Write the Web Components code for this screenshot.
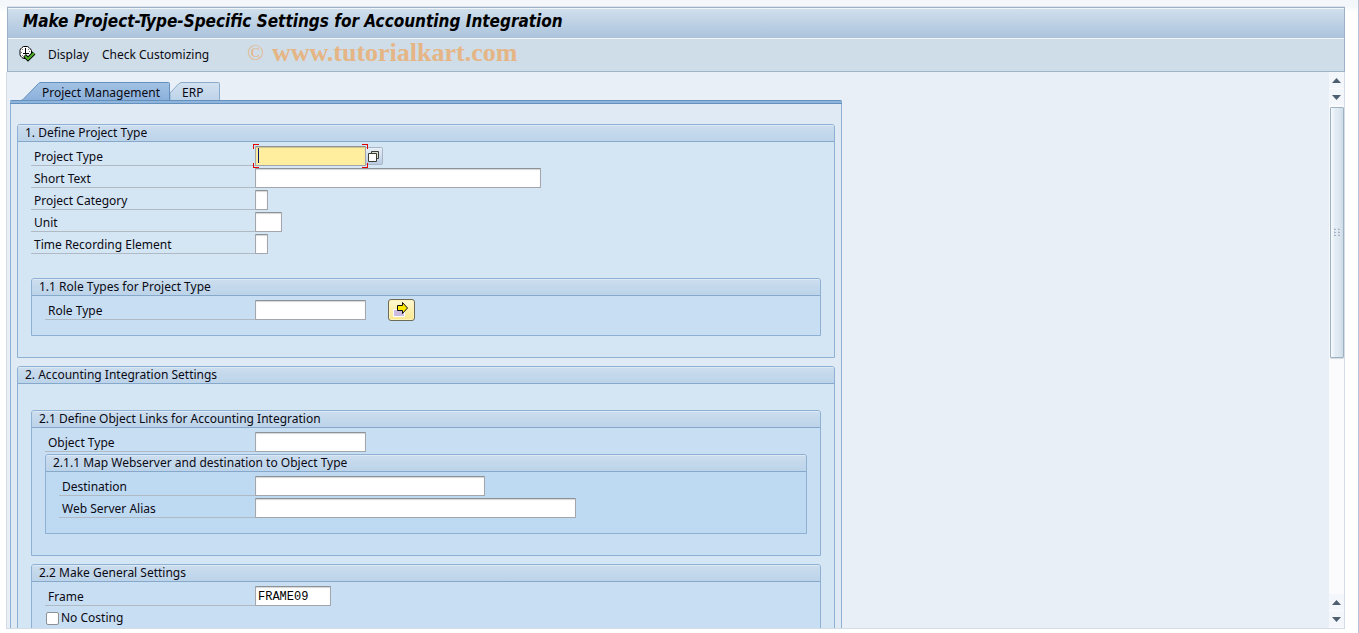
<!DOCTYPE html>
<html lang="en">
<head>
<meta charset="utf-8">
<title>Make Project-Type-Specific Settings for Accounting Integration</title>
<style>
body { margin: 0; background: #fff; font: 12px/16px "Noto Sans", sans-serif; color: #0a0a14; }
</style>
</head>
<body>
<sap-page></sap-page>

<script>
function define(name, html, setup) {
  const tpl = document.createElement('template');
  tpl.innerHTML = '<style>*{box-sizing:border-box}button,input{font:inherit;color:inherit;margin:0}</style>' + html;
  customElements.define(name, class extends HTMLElement {
    constructor() {
      super();
      this.attachShadow({ mode: 'open' }).appendChild(tpl.content.cloneNode(true));
    }
    connectedCallback() { if (setup) setup(this, this.shadowRoot); }
  });
}

/* Title bar */
define('sap-titlebar', `
<style>
:host { display: block; box-sizing: border-box; height: 31px; padding: 0 15px; border-bottom: 1px solid #f2f6fa;
  background: linear-gradient(#f0f5fa 0 1px, #cfdfec 1px, #abc3dc); }
h1 { margin: 0; font: italic bold 17px/26px "DejaVu Sans Condensed", "DejaVu Sans", sans-serif; color: #000; white-space: nowrap; }
</style>
<h1><slot></slot></h1>`);

/* Application toolbar */
define('sap-toolbar', `
<style>
:host { display: flex; box-sizing: border-box; align-items: center; height: 33px; padding-left: 10px;
  background: #cfdde8; border-bottom: 1px solid #9fb4c7; }
button { border: 0; padding: 0; background: none; white-space: nowrap; line-height: 16px; }
.exec { width: 18px; height: 18px; margin-right: 12px; }
.check { margin-left: 13px; }
svg { display: block; }
.mark { display: flex; align-items: center; gap: 8px; margin-left: 38px; color: #e5b585; height: 24px; margin-bottom: 5px; }
.c { font: 22px/24px "Liberation Serif", serif; }
.w { font: bold 26px/24px "Liberation Serif", serif; }
</style>
<button class="exec" aria-label="Execute"><svg width="18" height="18" viewBox="0 0 18 18">
<path d="M5.500 .5h4l1.500 1 1.500 1.500 1 1.500v4l-1 1.500-1.500 1.500-1.500 1h-4l-1.500-1-1.500-1.500-.5-1.500v-4l.5-1.500 1.500-1.500z" fill="#fff" stroke="#000"/>
<path d="M7.500 2v5.500M5 7.500h6" stroke="#000" fill="none"/>
<path d="M3 6.500h1M11 5.500h1M4.500 9v1M4.500 3v1M10.500 3v1" stroke="#777"/>
<path d="M6.500 9.500l3.500 3.500 6-6" stroke="#000" stroke-width="4" fill="none"/>
<path d="M7 10l3 3 6-6" stroke="#4fae24" stroke-width="2.200" fill="none"/>
</svg></button>
<button class="display">Display</button>
<button class="check">Check Customizing</button>
<div class="mark"><span class="c">©</span><span class="w">www.tutorialkart.com</span></div>`);

/* Tab strip */
define('sap-tabs', `
<style>
:host { display: block; width: 832px; }
.strip { display: flex; height: 18px; padding-left: 11px; }
button { position: relative; border: 0; padding: 0; background: none; height: 18px; line-height: 21px; white-space: nowrap; }
.on { width: 149px; padding-left: 21px; text-align: left; }
.off { width: 50px; padding-left: 12px; text-align: left; }
svg { position: absolute; left: 0; top: 0; z-index: -1; }
.strip { position: relative; z-index: 0; }
.body { border: 1px solid #8eb0d2; border-top: 0; border-radius: 2px 2px 0 0; background: #dfeaf4; }
.bar { height: 4px; margin: 0 -1px; border-top: 1px solid #6490bd; border-bottom: 1px solid #6490bd; background: #8fb5dd; border-radius: 2px 2px 0 0; }
.in { padding: 20px 6px 0; }
</style>
<div class="strip" role="tablist">
<button class="on" role="tab" aria-selected="true"><svg width="149" height="18"><defs><linearGradient id="a" x2="0" y2="1"><stop stop-color="#a3c3e4"/><stop offset="1" stop-color="#8bb0db"/></linearGradient></defs><path d="M0 18.500L2 17.500L17.500 1.500L19 .5H147.500Q148.500 .5 148.500 1.500V18.500" fill="url(#a)" stroke="#6490bd"/></svg>Project Management</button>
<button class="off" role="tab" aria-selected="false"><svg width="50" height="18"><defs><linearGradient id="b" x2="0" y2="1"><stop stop-color="#d2e1ef"/><stop offset="1" stop-color="#bdd3e9"/></linearGradient></defs><path d="M0 11L8.500 2L11 .5H48.500Q49.500 .5 49.500 1.500V18.500H0z" fill="url(#b)" stroke="#8aabc9"/></svg>ERP</button>
</div>
<div class="body"><div class="bar"></div><div class="in"><slot></slot></div></div>`);

/* Group box with heading; nests up to three levels */
define('sap-group', `
<style>
:host { display: block; }
section { border: 1px solid #8eb0d2; border-radius: 3px 3px 0 0; background: var(--fill, #d4e5f3); }
h2 { margin: 0; height: 17px; padding-left: 7px; font: inherit; line-height: 15px; border-bottom: 1px solid #86a8cb; border-radius: 2px 2px 0 0;
  background: linear-gradient(#dde9f4 0 1px, #cbddee 1px, #bcd3e9); white-space: nowrap; }
.in { padding: 4px 13px var(--end, 13px); }
</style>
<section><h2></h2><div class="in"><slot></slot></div></section>`, (el, root) => {
  root.querySelector('h2').textContent = el.getAttribute('heading');
});

/* Label and text box on one row */
define('sap-field', `
<style>
:host { display: flex; height: 22px; align-items: flex-start; }
label { box-sizing: border-box; flex: none; width: var(--label, 224px); height: 20px; padding-left: 3px; line-height: 22px; border-bottom: 1px solid #b0bac4; white-space: nowrap; }
.box { position: relative; }
input { display: block; height: 20px; padding: 2px 2px 0; border: 1px solid #a3a7ab; border-top: 1px solid #8d9297; border-radius: 1px; outline: 0;
  background: #fff; box-shadow: inset 0 1px 1px #d5d5d5; font: 12px/16px "Liberation Mono", monospace; color: #000; }
i { display: none; }
:host([focused]) input { background: linear-gradient(#0a1a6a, #0a1a6a) 2px 1px / 1px 15px no-repeat, #ffee9e; box-shadow: inset 0 1px 1px #cfc38c; }
:host([focused]) i { display: block; position: absolute; width: 6px; height: 5px; border: 0 solid #e00000; }
.a { left: -2px; top: -2px; border-width: 1px 0 0 1px !important; }
.b { right: -2px; top: -2px; border-width: 1px 1px 0 0 !important; }
.c { left: -2px; bottom: -2px; border-width: 0 0 1px 1px !important; }
.d { right: -2px; bottom: -2px; border-width: 0 1px 1px 0 !important; }
</style>
<label for="f"></label><div class="box"><input id="f" type="text"><i class="a"></i><i class="b"></i><i class="c"></i><i class="d"></i></div><slot></slot>`, (el, root) => {
  root.querySelector('label').textContent = el.getAttribute('label');
  const f = root.querySelector('input');
  f.style.width = el.getAttribute('size') + 'px';
  f.value = el.getAttribute('value') || '';
});

define('sap-help-button', `
<style>
:host { display: block; margin-top: 1px; }
button { display: block; width: 17px; height: 18px; padding: 0; border: 1px solid #aab6c4; border-left: 0; border-radius: 0 2px 2px 0; background: linear-gradient(#e8eff7, #b9cbe2); }
svg { display: block; }
</style>
<button aria-label="Input help"><svg width="15" height="16"><path d="M5.500 3.500h7v7h-7z" fill="#d9dfd4" stroke="#3c3c32"/><path d="M2.500 5.500h8v8h-8z" fill="#fff" stroke="#3c3c32"/></svg></button>`);

define('sap-go-button', `
<style>
:host { display: block; margin: -1px 0 0 22px; }
button { display: block; width: 27px; height: 22px; padding: 0; border: 1px solid #6e6a58; border-radius: 3px; background: linear-gradient(#fff9d4, #fbe78c); box-shadow: inset 0 0 0 1px #fff3b8; }
svg { display: block; }
</style>
<button aria-label="Role types"><svg width="25" height="20"><path d="M4.500 9.500h11v7h-11z" fill="#cdbbe0" stroke="#fff"/><path d="M8.500 5.500h5v-3l5 5.500-5 5.500v-3h-5z" fill="#ffe800" stroke="#111"/></svg></button>`);

define('sap-check', `
<style>
:host { display: flex; align-items: center; height: 20px; margin-left: 1px; }
input { appearance: none; width: 13px; height: 13px; border: 1px solid #8c9196; border-radius: 2px; background: #fff; margin: 1px 2px 0 0; }
label { line-height: 22px; white-space: nowrap; }
</style>
<input id="c" type="checkbox"><label for="c"><slot></slot></label>`);

/* Vertical scroll bar */
define('sap-scrollbar', `
<style>
:host { display: flex; flex-direction: column; gap: 1px; width: 15px; padding: 0 0 1px; box-sizing: border-box; background: #fbfbfd; }
button { flex: none; height: 16px; width: 15px; padding: 0; border: 0; background: #f3f6fa; display: grid; place-items: center; }
.track { flex: 1; padding-top: 1px; }
.thumb { height: calc(50% + 8px); margin-left: 1px; border: 1px solid #9fb2c2; border-radius: 1px; background: linear-gradient(90deg, #f4f8fc 0 1px, #e2ecf5, #dfe9f2 60%, #cfdce7 100%); display: grid; place-items: center; box-shadow: 0 1px 1px #d5dbe1; }
svg { display: block; }
</style>
<button aria-label="Scroll up"><svg width="9" height="5"><path d="M0 5L4.500 0L9 5z" fill="#4d5f70"/></svg></button>
<button aria-label="Scroll down"><svg width="9" height="5"><path d="M0 0L4.500 5L9 0z" fill="#4d5f70"/></svg></button>
<div class="track"><div class="thumb"><svg width="7" height="9"><path d="M0 1.500h2M4 1.500h2M0 4.500h2M4 4.500h2M0 7.500h2M4 7.500h2" stroke="#a3b2c4"/><path d="M0 .5h1M4 .5h1M0 3.500h1M4 3.500h1M0 6.500h1M4 6.500h1" stroke="#c5d0dc"/></svg></div></div>
<button aria-label="Page up"><svg width="9" height="5"><path d="M0 5L4.500 0L9 5z" fill="#4d5f70"/></svg></button>
<button aria-label="Page down"><svg width="9" height="5"><path d="M0 0L4.500 5L9 0z" fill="#4d5f70"/></svg></button>`);

define('sap-page', `
<style>
:host { display: flex; flex-direction: column; box-sizing: border-box; height: 100vh; overflow: hidden; padding: 7px 13px 4px 6px; border-right: 1px solid #b4c3d2;
  background: linear-gradient(#f3f6fa, #f5f8fb 7px, #fff 12px); }
.top { border: 1px solid #9db0c8; border-bottom: 0; margin-left: 1px; box-shadow: 0 -1px 0 #dfe3ee; }
.main { flex: 1; min-height: 0; display: flex; overflow: hidden; border: 1px solid #d3dbe6; border-top: 0; background: #e8eff6; }
.area { flex: 1; min-width: 0; overflow: hidden; padding: 10px 0 0 3px; }
.lvl2 { --fill: #c8def3; --label: 210px; }
.lvl3 { --fill: #bed9f2; --label: 196px; }
.outer { --end: 21px; }
.leaf { --end: 13px; }
.skip { margin-top: 22px; }
.next { margin-top: 8px; }
</style>
<div class="top">
<sap-titlebar>Make Project-Type-Specific Settings for Accounting Integration</sap-titlebar>
<sap-toolbar></sap-toolbar>
</div>
<div class="main">
<div class="area">
<sap-tabs>
  <sap-group class="outer" heading="1. Define Project Type">
    <sap-field label="Project Type" size="111" focused><sap-help-button></sap-help-button></sap-field>
    <sap-field label="Short Text" size="286"></sap-field>
    <sap-field label="Project Category" size="13"></sap-field>
    <sap-field label="Unit" size="27"></sap-field>
    <sap-field label="Time Recording Element" size="13"></sap-field>
    <sap-group class="lvl2 leaf skip" heading="1.1 Role Types for Project Type">
      <sap-field label="Role Type" size="111"><sap-go-button></sap-go-button></sap-field>
    </sap-group>
  </sap-group>
  <sap-group class="outer next" heading="2. Accounting Integration Settings">
    <sap-group class="lvl2 outer skip" heading="2.1 Define Object Links for Accounting Integration">
      <sap-field label="Object Type" size="111"></sap-field>
      <sap-group class="lvl3 leaf" heading="2.1.1 Map Webserver and destination to Object Type">
        <sap-field label="Destination" size="230"></sap-field>
        <sap-field label="Web Server Alias" size="321"></sap-field>
      </sap-group>
    </sap-group>
    <sap-group class="lvl2 leaf next" heading="2.2 Make General Settings">
      <sap-field label="Frame" size="76" value="FRAME09"></sap-field>
      <sap-check>No Costing</sap-check>
    </sap-group>
  </sap-group>
</sap-tabs>
</div>
<sap-scrollbar></sap-scrollbar>
</div>`);
</script>
</body>
</html>
